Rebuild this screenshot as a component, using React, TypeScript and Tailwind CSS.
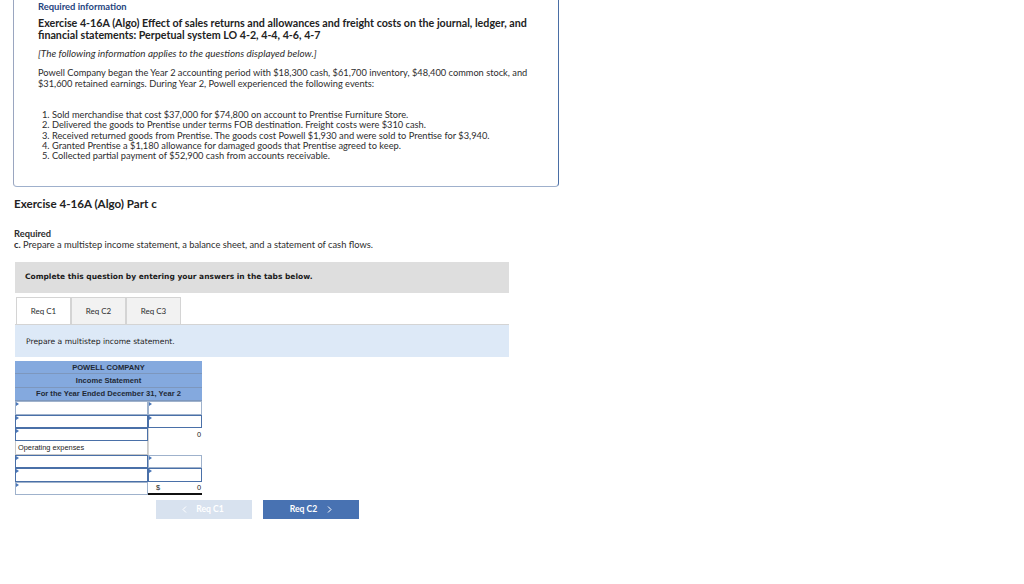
const sans = "font-['Lato','Liberation_Sans',sans-serif]";
const arial = "font-['Liberation_Sans',Arial,sans-serif]";

function Marker() {
  return <span className="absolute left-0 top-0 h-0 w-0 border-y-[2px] border-l-[3px] border-y-transparent border-l-[#4a76b8]" />;
}

function InputCell({ wide, strong }: { wide?: boolean; strong?: boolean }) {
  return (
    <div className={`relative h-full border bg-white ${strong ? "border-[#4a70a8]" : "border-[#9fb2cc]"} ${wide ? "w-[133px]" : "w-[54px]"}`}>
      <Marker />
    </div>
  );
}

function Row({ children }: { children: React.ReactNode }) {
  return <div className="flex h-[13.4px]">{children}</div>;
}

function HeaderRow({ text }: { text: string }) {
  return (
    <div className="flex h-[13.4px] items-center justify-center border-b border-[#7d97bd] bg-[#84a9de] text-[7.6px] font-bold text-[#1f2937]">
      {text}
    </div>
  );
}

function Tab({ label, active }: { label: string; active?: boolean }) {
  return (
    <div className={`flex h-[27px] w-[55px] items-center justify-center border border-b-0 border-[#d4d4d4] text-[8px] ${active ? "bg-white" : "bg-[#f2f2f2]"}`}>
      {label}
    </div>
  );
}

function Chevron({ left }: { left?: boolean }) {
  return (
    <svg width="5" height="7" viewBox="0 0 5 7" fill="none" stroke="white" strokeWidth="1">
      <path d={left ? "M4 0.5 L1 3.5 L4 6.5" : "M1 0.5 L4 3.5 L1 6.5"} />
    </svg>
  );
}

export default function App() {
  return (
    <div className={`h-[584px] w-[1024px] overflow-hidden bg-white text-[#2d2d2d] ${sans}`}>
      <div className="ml-[13px] h-[187px] w-[546px] rounded-b-[4px] border-x border-b border-x-[#9aa6c0] border-b-[#9fb0cc] border-r-[#4a6ea5] pl-[24px] pr-[20px]">
        <p className="text-[9.4px] leading-[14px] font-bold text-[#1f4480]">Required information</p>
        <p className="mt-[3px] text-[10.7px] leading-[12px] font-bold text-[#222]">
          Exercise 4-16A (Algo) Effect of sales returns and allowances and freight costs on the journal, ledger, and
          <br />
          financial statements: Perpetual system LO 4-2, 4-4, 4-6, 4-7
        </p>
        <p className="mt-[6px] text-[9.9px] leading-[12px] italic">[The following information applies to the questions displayed below.]</p>
        <p className="mt-[8px] text-[9.26px] leading-[11px]">
          Powell Company began the Year 2 accounting period with $18,300 cash, $61,700 inventory, $48,400 common stock, and
          <br />
          $31,600 retained earnings. During Year 2, Powell experienced the following events:
        </p>
        <ol className="mt-[21px] pl-[4px] text-[9.27px] leading-[10.3px]">
          <li>1. Sold merchandise that cost $37,000 for $74,800 on account to Prentise Furniture Store.</li>
          <li>2. Delivered the goods to Prentise under terms FOB destination. Freight costs were $310 cash.</li>
          <li>3. Received returned goods from Prentise. The goods cost Powell $1,930 and were sold to Prentise for $3,940.</li>
          <li>4. Granted Prentise a $1,180 allowance for damaged goods that Prentise agreed to keep.</li>
          <li>5. Collected partial payment of $52,900 cash from accounts receivable.</li>
        </ol>
      </div>

      <h2 className="mt-[10px] ml-[14px] text-[11.6px] leading-[14px] font-bold text-[#222]">Exercise 4-16A (Algo) Part c</h2>

      <div className="mt-[17px] ml-[14px] text-[9.3px] leading-[11px]">
        <p className="font-bold">Required</p>
        <p><span className="font-bold">c.</span> Prepare a multistep income statement, a balance sheet, and a statement of cash flows.</p>
      </div>

      <div className="mt-[12px] ml-[15px] flex h-[31px] w-[494px] items-center bg-[#dedede] pb-[2px] pl-[10px] font-['DejaVu_Sans',sans-serif] text-[7.5px] font-bold text-[#1a1a1a]">
        Complete this question by entering your answers in the tabs below.
      </div>

      <div className="mt-[4px] ml-[15px] w-[494px]">
        <div className="flex border-b border-[#d4d4d4] pl-[1px]">
          <Tab label="Req C1" active />
          <Tab label="Req C2" />
          <Tab label="Req C3" />
        </div>
        <div className="flex h-[32px] items-center bg-[#dde9f7] pt-[1px] pl-[11px] font-['DejaVu_Sans',sans-serif] text-[7.6px] text-[#222]">
          Prepare a multistep income statement.
        </div>
      </div>

      <div className={`mt-[4px] ml-[15px] w-[187px] text-[7.4px] text-[#222] ${arial}`}>
        <HeaderRow text="POWELL COMPANY" />
        <HeaderRow text="Income Statement" />
        <HeaderRow text="For the Year Ended December 31, Year 2" />
        <Row><InputCell wide /><InputCell /></Row>
        <Row><InputCell wide strong /><InputCell strong /></Row>
        <Row>
          <InputCell wide strong />
          <div className="flex w-[54px] items-center justify-end border-l border-[#d5d5d5] pr-[1px]">0</div>
        </Row>
        <Row>
          <div className="flex w-[133px] items-center border border-[#c8c8c8] border-t-0 pl-[2px]">Operating expenses</div>
          <div className="w-[54px] border-l border-[#d5d5d5]" />
        </Row>
        <Row><InputCell wide strong /><InputCell /></Row>
        <Row><InputCell wide strong /><InputCell strong /></Row>
        <Row>
          <InputCell wide />
          <div className="flex w-[54px] items-center justify-between border-b-2 border-[#111] pr-[1px] pl-[8px]">
            <span>$</span>
            <span>0</span>
          </div>
        </Row>
      </div>

      <div className="mt-[5px] ml-[156px] flex gap-[11px] text-[8.6px] font-bold text-white">
        <div className="flex h-[19px] w-[96px] items-center justify-center gap-[9px] bg-[#d8e2ef] pr-[2px]">
          <Chevron left />
          <span>Req C1</span>
        </div>
        <div className="flex h-[19px] w-[96px] items-center justify-center gap-[10px] bg-[#4872b2]">
          <span>Req C2</span>
          <Chevron />
        </div>
      </div>
    </div>
  );
}
